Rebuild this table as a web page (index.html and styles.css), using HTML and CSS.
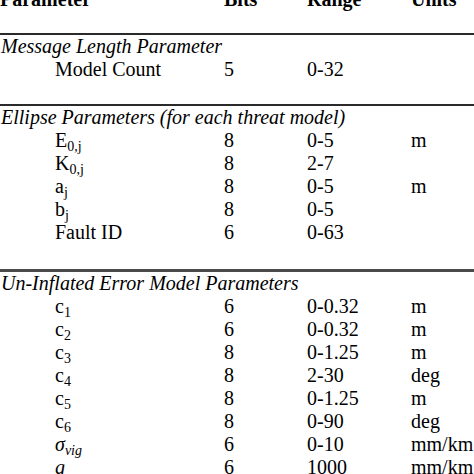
FILE: index.html
```html
<!DOCTYPE html>
<html>
<head>
<meta charset="utf-8">
<link rel="stylesheet" href="styles.css">
</head>
<body>
<div class="table">
  <div class="row head">
    <span class="c1">Parameter</span><span>Bits</span><span>Range</span><span>Units</span>
  </div>

  <div class="group g1">
    <div class="title">Message Length Parameter</div>
    <div class="row item"><span class="c1">Model Count</span><span>5</span><span>0-32</span><span></span></div>
  </div>

  <div class="group g2">
    <div class="title">Ellipse Parameters (for each threat model)</div>
    <div class="row item"><span class="c1">E<sub>0,j</sub></span><span>8</span><span>0-5</span><span>m</span></div>
    <div class="row item"><span class="c1">K<sub>0,j</sub></span><span>8</span><span>2-7</span><span></span></div>
    <div class="row item"><span class="c1">a<sub>j</sub></span><span>8</span><span>0-5</span><span>m</span></div>
    <div class="row item"><span class="c1">b<sub>j</sub></span><span>8</span><span>0-5</span><span></span></div>
    <div class="row item"><span class="c1">Fault ID</span><span>6</span><span>0-63</span><span></span></div>
  </div>

  <div class="group g3">
    <div class="title">Un-Inflated Error Model Parameters</div>
    <div class="row item"><span class="c1">c<sub>1</sub></span><span>6</span><span>0-0.32</span><span>m</span></div>
    <div class="row item"><span class="c1">c<sub>2</sub></span><span>6</span><span>0-0.32</span><span>m</span></div>
    <div class="row item"><span class="c1">c<sub>3</sub></span><span>8</span><span>0-1.25</span><span>m</span></div>
    <div class="row item"><span class="c1">c<sub>4</sub></span><span>8</span><span>2-30</span><span>deg</span></div>
    <div class="row item"><span class="c1">c<sub>5</sub></span><span>8</span><span>0-1.25</span><span>m</span></div>
    <div class="row item"><span class="c1">c<sub>6</sub></span><span>8</span><span>0-90</span><span>deg</span></div>
    <div class="row item"><span class="c1"><i>σ<sub>vig</sub></i></span><span>6</span><span>0-10</span><span>mm/km</span></div>
    <div class="row item"><span class="c1"><i>g</i></span><span>6</span><span>1000</span><span>mm/km</span></div>
  </div>
</div>
</body>
</html>
```

FILE: styles.css
```css
html, body {
  margin: 0;
  padding: 0;
  background: #fff;
  overflow: hidden;
}
body {
  width: 474px;
  height: 474px;
  font-family: "Liberation Serif", "Times New Roman", serif;
  font-size: 20px;
  line-height: 23px;
  color: #000;
}
.table {
  margin-top: -12px;
}
.row {
  display: grid;
  grid-template-columns: 224px 83px 104px 1fr;
  height: 23px;
  white-space: nowrap;
}
.head {
  font-weight: bold;
  margin-bottom: 22px;
}
.item .c1 {
  padding-left: 55px;
}
.title {
  font-style: italic;
  height: 23px;
  white-space: nowrap;
  padding-left: 1px;
}
.group {
  border-top: 2px solid #2a2a2a;
}
.g1 {
  padding-bottom: 23px;
}
.g2 {
  padding-bottom: 25px;
}
.g3 {
  border-top: 3px solid #4a4a4a;
}
sub {
  font-size: 14px;
  line-height: 0;
  vertical-align: -4px;
}
i sub {
  font-style: italic;
}
```
